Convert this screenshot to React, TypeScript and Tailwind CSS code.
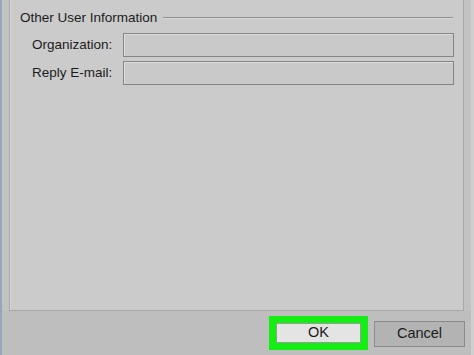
const font = { fontFamily: '"Liberation Sans", Arial, sans-serif' };

function Field({ label }: { label: string }) {
  return (
    <div className="flex items-center">
      <div className="w-[113px] shrink-0 pl-[22px] text-[13.5px] text-[#1b1b1b] whitespace-nowrap">{label}</div>
      <div className="w-[331px] shrink-0 h-[24px] border border-[#858585] bg-[#c9c9c9] shadow-[inset_1px_1px_0_#dcdcdc]" />
    </div>
  );
}

export default function App() {
  return (
    <div
      className="flex w-[474px] h-[355px] overflow-hidden bg-[#c2c2c2] border-l-2 border-[#93a7bd] border-r-[3px] border-r-[#cfcfcf]"
      style={font}
    >
      <div className="flex flex-col flex-1">
        {/* group box, its top edge is cut off above the window */}
        <div className="ml-[7px] w-[455px] h-[311px] shrink-0 border-x border-b border-[#a8a8a8] bg-[#cbcbcb] shadow-[inset_1px_0_0_#d6d6d6]">
          <div className="flex items-center pt-[8px] pl-[10px] pr-[10px]">
            <span className="text-[13.5px] text-[#1b1b1b] whitespace-nowrap">Other User Information</span>
            <div className="flex-1 ml-[6px] h-[2px] border-t border-[#8d8d8d] border-b border-b-[#dadada]" />
          </div>
          <div className="flex flex-col gap-[4px] mt-[5px]">
            <Field label="Organization:" />
            <Field label="Reply E-mail:" />
          </div>
        </div>

        <div className="flex items-start justify-end gap-[6px] pr-[6px] pt-[5px] flex-1 bg-[#bebebe]">
          <div className="w-[99px] h-[34px] border-[7px] border-[#14ee14]">
            <button className="w-full h-full border border-[#9a9a9a] bg-[#e4e4e4] text-[14.5px] text-[#1b1b1b] flex items-center justify-center">
              OK
            </button>
          </div>
          <button className="mt-[5px] w-[91px] h-[26px] border border-[#8a8a8a] bg-[#b3b3b3] text-[14.5px] text-[#1b1b1b] flex items-center justify-center">
            Cancel
          </button>
        </div>
      </div>
    </div>
  );
}
